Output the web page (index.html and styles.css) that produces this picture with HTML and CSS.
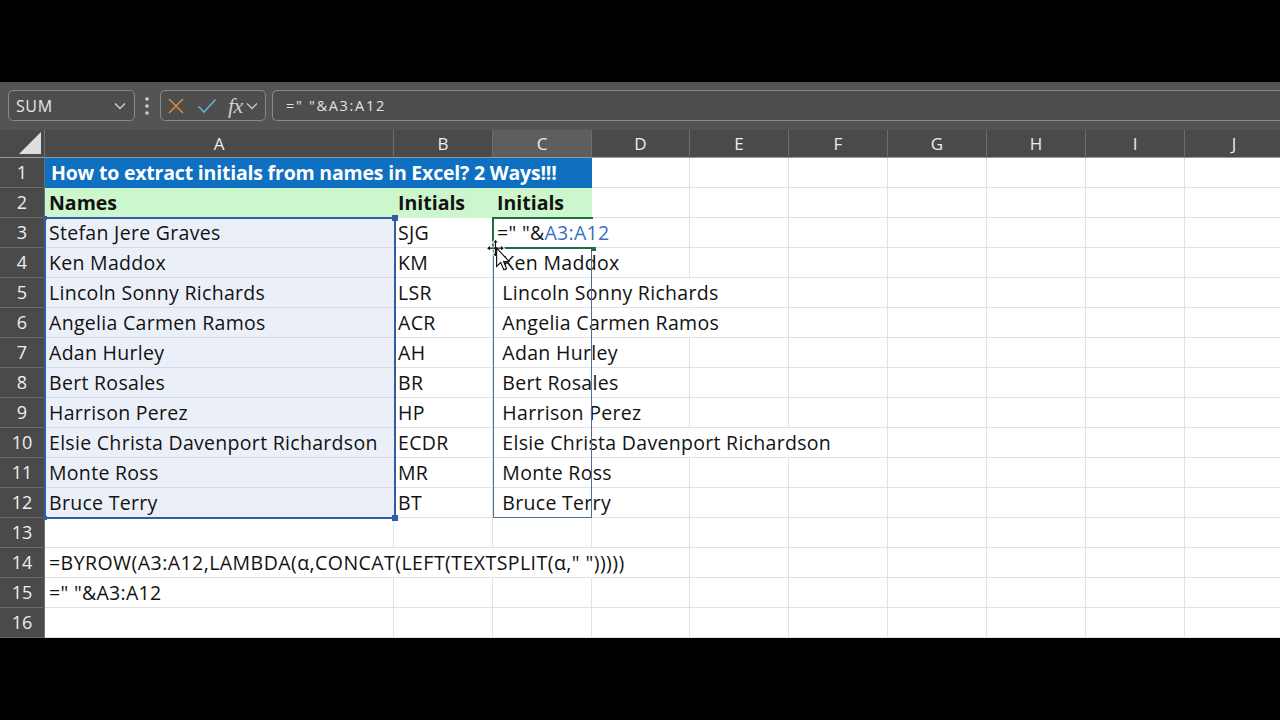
FILE: index.html
```html
<!DOCTYPE html>
<html>
<head>
<meta charset="utf-8">
<link rel="stylesheet" href="styles.css">
</head>
<body>
<div class="topblack"></div>
<div class="fbar">
  <div class="namebox">
    <span class="nbtext">SUM</span>
    <svg class="chev" width="12" height="8" viewBox="0 0 12 8"><path d="M1 1.5 L6 6.5 L11 1.5" fill="none" stroke="#d0d0d0" stroke-width="1.4"/></svg>
  </div>
  <svg class="dots" width="6" height="20" viewBox="0 0 6 20"><circle cx="3" cy="3" r="1.8" fill="#cfcfcf"/><circle cx="3" cy="10" r="1.8" fill="#cfcfcf"/><circle cx="3" cy="17" r="1.8" fill="#cfcfcf"/></svg>
  <div class="btngroup">
    <svg width="18" height="18" viewBox="0 0 18 18"><path d="M2 2 L16 16 M16 2 L2 16" stroke="#e08a3c" stroke-width="1.6" fill="none"/></svg>
    <svg width="20" height="18" viewBox="0 0 20 18"><path d="M1.5 9.5 L7 15 L18.5 2.5" stroke="#63b3c3" stroke-width="1.6" fill="none"/></svg>
    <span class="fx">fx</span>
    <svg class="chev2" width="12" height="8" viewBox="0 0 12 8"><path d="M1 1.5 L6 6.5 L11 1.5" fill="none" stroke="#c8c8c8" stroke-width="1.3"/></svg>
  </div>
  <div class="finput">=" "&amp;A3:A12</div>
</div>
<div class="sheet">
  <div class="grid">
    <div class="corner"><svg width="22" height="22" viewBox="0 0 22 22"><path d="M22 0 L22 22 L0 22 Z" fill="#dedede"/></svg></div>
    <div class="ch">A</div><div class="ch">B</div><div class="ch csel">C</div><div class="ch">D</div><div class="ch">E</div><div class="ch">F</div><div class="ch">G</div><div class="ch">H</div><div class="ch">I</div><div class="ch">J</div>

    <div class="rh">1</div><div class="c title">How to extract initials from names in Excel? 2 Ways!!!</div><div class="c"></div><div class="c"></div><div class="c"></div><div class="c"></div><div class="c"></div><div class="c"></div><div class="c"></div>

    <div class="rh">2</div><div class="c hdr">Names</div><div class="c hdr">Initials</div><div class="c hdr">Initials</div><div class="c"></div><div class="c"></div><div class="c"></div><div class="c"></div><div class="c"></div><div class="c"></div><div class="c"></div>

    <div class="rh">3</div><div class="c sel">Stefan Jere Graves</div><div class="c">SJG</div><div class="c ov"></div><div class="c"></div><div class="c"></div><div class="c"></div><div class="c"></div><div class="c"></div><div class="c"></div><div class="c"></div>

    <div class="rh">4</div><div class="c sel">Ken Maddox</div><div class="c">KM</div><div class="c ov"> Ken Maddox</div><div class="c"></div><div class="c"></div><div class="c"></div><div class="c"></div><div class="c"></div><div class="c"></div><div class="c"></div>

    <div class="rh">5</div><div class="c sel">Lincoln Sonny Richards</div><div class="c">LSR</div><div class="c ov"> Lincoln Sonny Richards</div><div class="c ov"></div><div class="c"></div><div class="c"></div><div class="c"></div><div class="c"></div><div class="c"></div><div class="c"></div>

    <div class="rh">6</div><div class="c sel">Angelia Carmen Ramos</div><div class="c">ACR</div><div class="c ov"> Angelia Carmen Ramos</div><div class="c ov"></div><div class="c"></div><div class="c"></div><div class="c"></div><div class="c"></div><div class="c"></div><div class="c"></div>

    <div class="rh">7</div><div class="c sel">Adan Hurley</div><div class="c">AH</div><div class="c ov"> Adan Hurley</div><div class="c"></div><div class="c"></div><div class="c"></div><div class="c"></div><div class="c"></div><div class="c"></div><div class="c"></div>

    <div class="rh">8</div><div class="c sel">Bert Rosales</div><div class="c">BR</div><div class="c ov"> Bert Rosales</div><div class="c"></div><div class="c"></div><div class="c"></div><div class="c"></div><div class="c"></div><div class="c"></div><div class="c"></div>

    <div class="rh">9</div><div class="c sel">Harrison Perez</div><div class="c">HP</div><div class="c ov"> Harrison Perez</div><div class="c"></div><div class="c"></div><div class="c"></div><div class="c"></div><div class="c"></div><div class="c"></div><div class="c"></div>

    <div class="rh">10</div><div class="c sel">Elsie Christa Davenport Richardson</div><div class="c">ECDR</div><div class="c ov"> Elsie Christa Davenport Richardson</div><div class="c ov"></div><div class="c ov"></div><div class="c"></div><div class="c"></div><div class="c"></div><div class="c"></div><div class="c"></div>

    <div class="rh">11</div><div class="c sel">Monte Ross</div><div class="c">MR</div><div class="c ov"> Monte Ross</div><div class="c"></div><div class="c"></div><div class="c"></div><div class="c"></div><div class="c"></div><div class="c"></div><div class="c"></div>

    <div class="rh">12</div><div class="c sel">Bruce Terry</div><div class="c">BT</div><div class="c ov"> Bruce Terry</div><div class="c"></div><div class="c"></div><div class="c"></div><div class="c"></div><div class="c"></div><div class="c"></div><div class="c"></div>

    <div class="rh">13</div><div class="c"></div><div class="c"></div><div class="c"></div><div class="c"></div><div class="c"></div><div class="c"></div><div class="c"></div><div class="c"></div><div class="c"></div><div class="c"></div>

    <div class="rh">14</div><div class="c ov f14">=BYROW(A3:A12,LAMBDA(α,CONCAT(LEFT(TEXTSPLIT(α," ")))))</div><div class="c ov"></div><div class="c ov"></div><div class="c"></div><div class="c"></div><div class="c"></div><div class="c"></div><div class="c"></div><div class="c"></div><div class="c"></div>

    <div class="rh">15</div><div class="c">=" "&amp;A3:A12</div><div class="c"></div><div class="c"></div><div class="c"></div><div class="c"></div><div class="c"></div><div class="c"></div><div class="c"></div><div class="c"></div><div class="c"></div>

    <div class="rh">16</div><div class="c"></div><div class="c"></div><div class="c"></div><div class="c"></div><div class="c"></div><div class="c"></div><div class="c"></div><div class="c"></div><div class="c"></div><div class="c"></div>
  </div>

  <div class="refbox"><span class="h htl"></span><span class="h htr"></span><span class="h hbl"></span><span class="h hbr"></span></div>
  <div class="spill"></div>
  <div class="active"><span class="ah"></span></div>
  <div class="edittext">=" "&amp;<span class="refc">A3:A12</span></div>
  <svg class="cursor" width="30" height="34" viewBox="0 0 26 30">
    <path d="M9 1 L12 4.5 L10 4.5 L10 8 L13.5 8 L13.5 6 L17 9 L13.5 12 L13.5 10 L10 10 L10 13.5 L12 13.5 L9 17 L6 13.5 L8 13.5 L8 10 L4.5 10 L4.5 12 L1 9 L4.5 6 L4.5 8 L8 8 L8 4.5 L6 4.5 Z" fill="#111" stroke="#fff" stroke-width="0.9"/>
    <path d="M10 9 L10 25 L13.6 21.6 L16.4 28 L18.8 27 L16.2 20.8 L21 20.6 Z" fill="#fff" stroke="#111" stroke-width="1"/>
  </svg>
</div>
<div class="bottomblack"></div>
</body>
</html>
```

FILE: styles.css
```css
html, body {
  margin: 0;
  padding: 0;
  background: #000;
  width: 1280px;
  height: 720px;
  overflow: hidden;
}

.topblack {
  height: 82px;
  background: #000;
}

.fbar {
  height: 48px;
  background: #545454;
  display: flex;
  align-items: flex-start;
  padding: 8px 0 0 8px;
  box-sizing: border-box;
  font-family: "Open Sans", "Noto Sans", sans-serif;
}

.namebox {
  width: 127px;
  height: 31px;
  box-sizing: border-box;
  border: 1px solid #8a8a8a;
  border-radius: 5px;
  background: #4d4d4d;
  display: flex;
  align-items: center;
  justify-content: space-between;
  padding: 0 8px 0 7px;
}

.nbtext {
  color: #e6e6e6;
  font-size: 16px;
  letter-spacing: 0.6px;
}

.chev { display: block; }

.dots {
  display: block;
  margin: 6px 10px 0 9px;
}

.btngroup {
  width: 106px;
  height: 31px;
  box-sizing: border-box;
  border: 1px solid #8a8a8a;
  border-radius: 5px;
  background: #4d4d4d;
  display: flex;
  align-items: center;
  padding: 0 4px 0 6px;
}

.btngroup svg:first-child { margin-right: 12px; }

.fx {
  font-family: "Liberation Serif", "DejaVu Serif", serif;
  font-style: italic;
  color: #cfcfcf;
  font-size: 22px;
  line-height: 20px;
  margin-left: 11px;
  letter-spacing: -0.5px;
}

.chev2 {
  display: block;
  margin-left: 3px;
}

.finput {
  flex: 1;
  height: 31px;
  margin-left: 6px;
  box-sizing: border-box;
  border: 1px solid #8a8a8a;
  border-right: none;
  border-radius: 5px 0 0 5px;
  background: #4d4d4d;
  color: #e2e2e2;
  font-size: 14.5px;
  line-height: 29px;
  padding-left: 13px;
  letter-spacing: 1.7px;
  white-space: pre;
}

.sheet {
  position: relative;
  width: 1280px;
  overflow: hidden;
  background: #fff;
  font-family: "Open Sans", "Noto Sans", sans-serif;
}

.grid {
  display: grid;
  grid-template-columns: 45px 349px 99px 99px 98px 99px 99px 99px 99px 99px 99px;
  grid-template-rows: 28px repeat(16, 30px);
  width: 1284px;
}

.corner {
  background: #4a4a4a;
  border-right: 1px solid #6e6e6e;
  border-bottom: 1px solid #9a9a9a;
  box-sizing: border-box;
  display: flex;
  align-items: flex-end;
  justify-content: flex-end;
  padding: 0 3px 3px 0;
}

.corner svg { display: block; }

.ch {
  background: #4a4a4a;
  color: #ececec;
  font-size: 17px;
  line-height: 27px;
  text-align: center;
  border-right: 1px solid #6e6e6e;
  border-bottom: 1px solid #9a9a9a;
  box-sizing: border-box;
}

.ch.csel {
  background: #5e5e5e;
}

.rh {
  background: #4a4a4a;
  color: #efefef;
  font-size: 18px;
  line-height: 29px;
  text-align: center;
  border-bottom: 1px solid #6a6a6a;
  border-right: 1px solid #6e6e6e;
  box-sizing: border-box;
}

.c {
  box-sizing: border-box;
  border-right: 1px solid #e1e1e1;
  border-bottom: 1px solid #e1e1e1;
  font-size: 19.5px;
  line-height: 29px;
  color: #121212;
  padding-left: 4px;
  letter-spacing: 0.3px;
  white-space: pre;
  overflow: visible;
  min-width: 0;
}

.c.f14 {
  letter-spacing: 0.45px;
}

.c.ov {
  border-right-color: transparent;
}

.c.title {
  grid-column: span 3;
  background: #0f6fc1;
  color: #fff;
  font-weight: 700;
  border: none;
  padding-left: 6px;
  letter-spacing: -0.2px;
}

.c.hdr {
  background: #ccf6cc;
  font-weight: 700;
  border: none;
  letter-spacing: 0;
}

.c.sel {
  background: #ebf0f8;
  border-bottom-color: #d2d9e4;
  border-right: none;
}

.refc {
  color: #3b6fc0;
}

.refbox {
  position: absolute;
  left: 44px;
  top: 87px;
  width: 352px;
  height: 302px;
  box-sizing: border-box;
  border: 2px solid #2f5ea6;
}

.h {
  position: absolute;
  width: 6px;
  height: 6px;
  background: #2f5ea6;
}

.htl { left: -3px; top: -3px; width: 4px; height: 4px; }
.htr { right: -4px; top: -4px; }
.hbl { left: -3px; bottom: -3px; width: 4px; height: 4px; }
.hbr { right: -4px; bottom: -4px; }

.spill {
  position: absolute;
  left: 493px;
  top: 88px;
  width: 99px;
  height: 300px;
  box-sizing: border-box;
  border: 1px solid #4d6c96;
}

.active {
  position: absolute;
  left: 492px;
  top: 87px;
  width: 101px;
  height: 32px;
  box-sizing: border-box;
  border: 2px solid #1f6d43;
  border-right: none;
}

.ah {
  position: absolute;
  right: -3px;
  bottom: -4px;
  width: 5px;
  height: 5px;
  background: #1f6d43;
}

.edittext {
  position: absolute;
  left: 494px;
  top: 89px;
  height: 28px;
  line-height: 28px;
  padding: 0 5px 0 3px;
  background: #fff;
  font-size: 19.5px;
  letter-spacing: 0.3px;
  color: #111;
  white-space: pre;
}

.cursor {
  position: absolute;
  left: 485px;
  top: 108px;
}

.bottomblack {
  height: 82px;
  background: #000;
}
```
